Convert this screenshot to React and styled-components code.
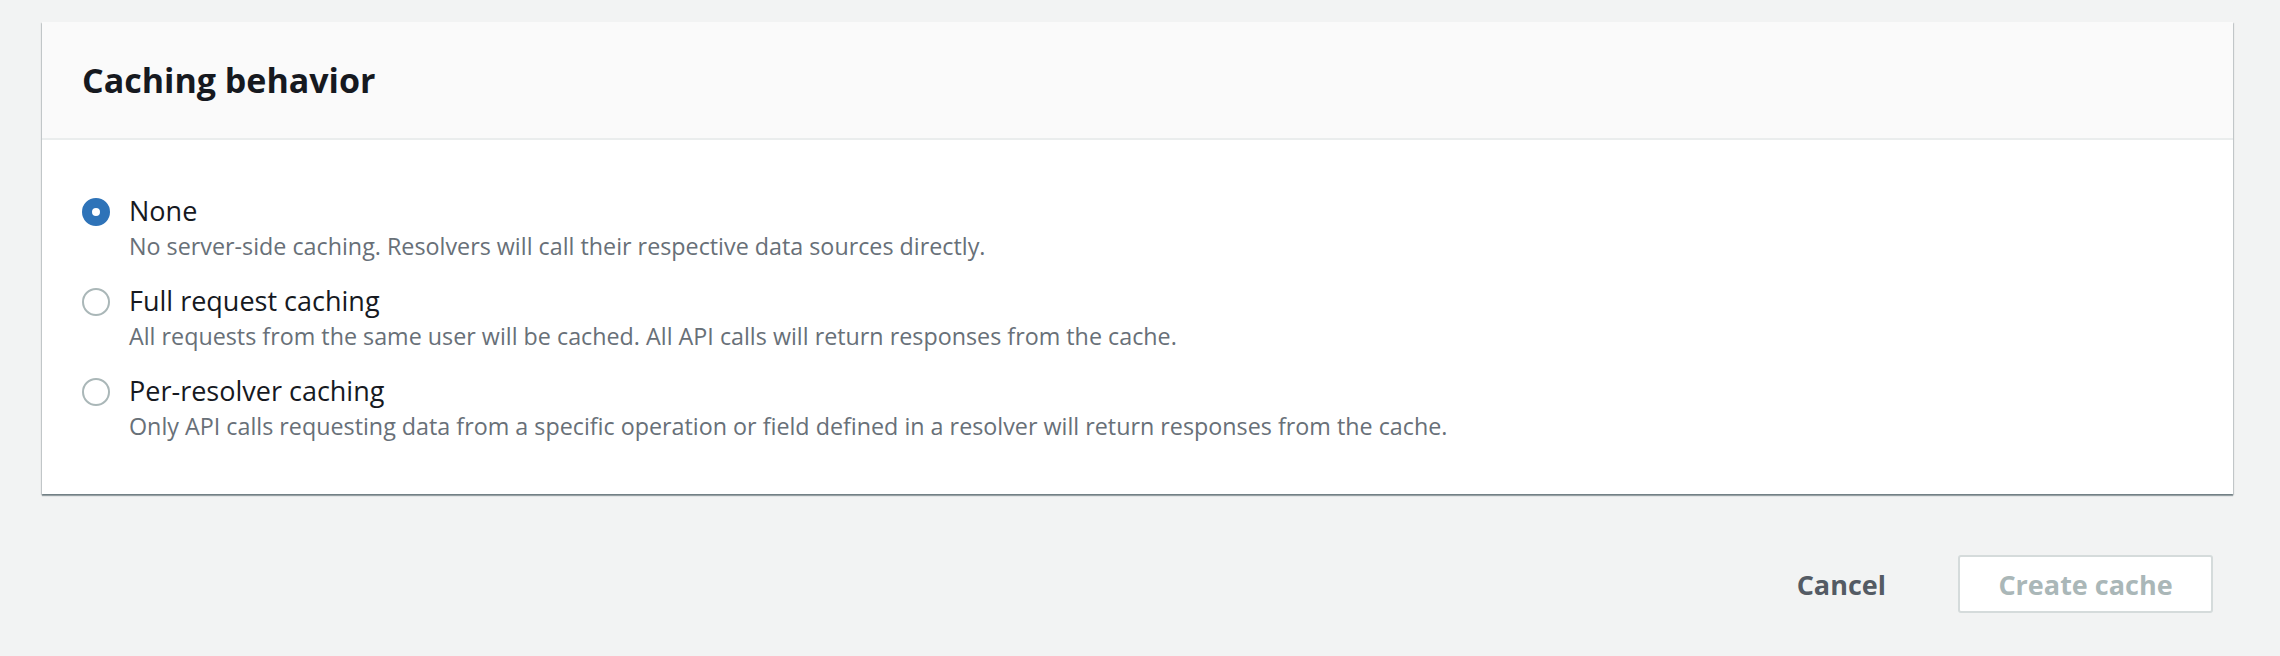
import React, { useState } from 'react'
import styled, { createGlobalStyle } from 'styled-components'

const GlobalStyle = createGlobalStyle`
  html, body {
    margin: 0;
    padding: 0;
    background: #f2f3f3;
    font-family: "Open Sans", "Liberation Sans", sans-serif;
    -webkit-font-smoothing: antialiased;
  }
`

const Page = styled.div`
  width: 2280px;
  height: 656px;
  box-sizing: border-box;
  padding: 22px 47px 0 42px;
  display: flex;
  flex-direction: column;
`

const Card = styled.div`
  background: #ffffff;
  box-shadow: 0 2px 1px 0 rgba(0, 28, 36, 0.35),
    1px 1px 1px 0 rgba(0, 28, 36, 0.15),
    -1px 1px 1px 0 rgba(0, 28, 36, 0.15);
`

const CardHeader = styled.div`
  height: 116px;
  background: #fafafa;
  border-bottom: 2px solid #eaeded;
  display: flex;
  align-items: center;
  padding-left: 40px;
`

const Title = styled.h2`
  margin: 0;
  font-size: 34px;
  font-weight: 700;
  color: #16191f;
`

const CardBody = styled.div`
  padding: 53px 40px 51px;
  display: flex;
  flex-direction: column;
  gap: 20px;
`

const Option = styled.label`
  display: flex;
  align-items: flex-start;
  gap: 19px;
  cursor: pointer;
`

const Radio = styled.span`
  flex: none;
  box-sizing: border-box;
  width: 28px;
  height: 28px;
  margin-top: 5px;
  border-radius: 50%;
  background: #ffffff;
  border: ${p => (p.$checked ? '10px solid #2e73b8' : '2px solid #aab7b8')};
`

const OptionText = styled.div`
  display: flex;
  flex-direction: column;
`

const Label = styled.div`
  font-size: 27px;
  line-height: 36px;
  color: #16191f;
`

const Description = styled.div`
  font-size: 23.3px;
  line-height: 34px;
  color: #687078;
`

const Footer = styled.div`
  display: flex;
  justify-content: flex-end;
  align-items: center;
  gap: 72px;
  padding: 61px 20px 0 0;
`

const LinkButton = styled.button`
  background: none;
  border: none;
  padding: 0;
  font-family: inherit;
  font-size: 27px;
  font-weight: 700;
  color: #545b64;
  cursor: pointer;
`

const PrimaryButton = styled.button`
  width: 255px;
  height: 58px;
  padding: 0;
  background: #ffffff;
  border: 2px solid #d5dbdb;
  border-radius: 3px;
  font-family: inherit;
  font-size: 27px;
  font-weight: 700;
  color: #aab7b8;
  cursor: default;
`

const options = [
  {
    id: 'none',
    label: 'None',
    description: 'No server-side caching. Resolvers will call their respective data sources directly.',
  },
  {
    id: 'full',
    label: 'Full request caching',
    description: 'All requests from the same user will be cached. All API calls will return responses from the cache.',
  },
  {
    id: 'resolver',
    label: 'Per-resolver caching',
    description:
      'Only API calls requesting data from a specific operation or field defined in a resolver will return responses from the cache.',
  },
]

export default function App() {
  const [selected, setSelected] = useState('none')

  return (
    <>
      <GlobalStyle />
      <Page>
        <Card>
          <CardHeader>
            <Title>Caching behavior</Title>
          </CardHeader>
          <CardBody>
            {options.map(o => (
              <Option key={o.id} onClick={() => setSelected(o.id)}>
                <Radio $checked={selected === o.id} />
                <OptionText>
                  <Label>{o.label}</Label>
                  <Description>{o.description}</Description>
                </OptionText>
              </Option>
            ))}
          </CardBody>
        </Card>
        <Footer>
          <LinkButton>Cancel</LinkButton>
          <PrimaryButton disabled>Create cache</PrimaryButton>
        </Footer>
      </Page>
    </>
  )
}
